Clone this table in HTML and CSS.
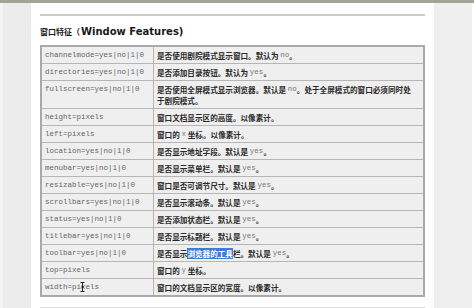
FILE: index.html
```html
<!DOCTYPE html>
<html lang="zh-CN">
<head>
    <meta charset="UTF-8">
    <title>Window Features</title>
    <link rel="stylesheet" href="styles.css">
</head>
<body>
    <div class="topbar"></div>
    <div class="page">
        <div class="side-left"></div>

        <div class="main">
            <div class="rule"></div>
            <h2 class="title"><span class="cjk">窗口特征（</span>Window Features)</h2>

            <!-- window.open() features -->
            <table class="features">
                <tr><td class="key">channelmode=yes|no|1|0</td><td>是否使用剧院模式显示窗口。默认为 <code>no</code>。</td></tr>
                <tr><td class="key">directories=yes|no|1|0</td><td>是否添加目录按钮。默认为 <code>yes</code>。</td></tr>
                <tr><td class="key">fullscreen=yes|no|1|0</td><td>是否使用全屏模式显示浏览器。默认是 <code>no</code>。处于全屏模式的窗口必须同时处于剧院模式。</td></tr>
                <tr><td class="key">height=pixels</td><td>窗口文档显示区的高度。以像素计。</td></tr>
                <tr><td class="key">left=pixels</td><td>窗口的 <code>x</code> 坐标。以像素计。</td></tr>
                <tr><td class="key">location=yes|no|1|0</td><td>是否显示地址字段。默认是 <code>yes</code>。</td></tr>
                <tr><td class="key">menubar=yes|no|1|0</td><td>是否显示菜单栏。默认是 <code>yes</code>。</td></tr>
                <tr><td class="key">resizable=yes|no|1|0</td><td>窗口是否可调节尺寸。默认是 <code>yes</code>。</td></tr>
                <tr><td class="key">scrollbars=yes|no|1|0</td><td>是否显示滚动条。默认是 <code>yes</code>。</td></tr>
                <tr><td class="key">status=yes|no|1|0</td><td>是否添加状态栏。默认是 <code>yes</code>。</td></tr>
                <tr><td class="key">titlebar=yes|no|1|0</td><td>是否显示标题栏。默认是 <code>yes</code>。</td></tr>
                <tr><td class="key">toolbar=yes|no|1|0</td><td>是否显示<span class="selected">浏览器的工具</span>栏。默认是 <code>yes</code>。</td></tr>
                <tr><td class="key">top=pixels</td><td>窗口的 <code>y</code> 坐标。</td></tr>
                <tr><td class="key cursor-cell">width=pixels<svg class="ibeam" width="5" height="10" viewBox="0 0 5 10"><path d="M0.5 0.5h4M2.5 0.5v9M0.5 9.5h4M1 5h3" stroke="#222" stroke-width="1" fill="none"/></svg></td><td>窗口的文档显示区的宽度。以像素计。</td></tr>
            </table>

            <div class="rule rule-bottom"></div>
        </div>

        <div class="side-right"></div>
    </div>
</body>
</html>
```

FILE: styles.css
```css
body {
    margin: 0;
    background: #fff;
    font-family: "Noto Sans CJK SC", sans-serif;
    color: #222;
    overflow: hidden;
}

.topbar {
    height: 3px;
    background-color: #a3a496;
}

.page {
    display: flex;
    height: 305px;
}

.side-left {
    width: 31px;
    background-color: #ececec;
    border-left: 3px solid #f4f4f4;
    box-sizing: border-box;
}

.main {
    flex: 1;
    padding: 11px 9px 0 9px;
}

.side-right {
    width: 38px;
    margin-right: 2px;
    background-color: #efefef;
}

.rule {
    height: 2px;
    background-color: #cbcbcb;
}

.rule-bottom {
    margin-top: 10px;
    background-color: #dcdcdc;
}

.title {
    margin: 10px 0 7px 0;
    font-family: "DejaVu Sans", sans-serif;
    font-size: 10px;
    line-height: 12px;
    font-weight: bold;
    color: #1a1a1a;
}

.title .cjk {
    font-family: "Noto Sans CJK SC", sans-serif;
    font-size: 8px;
    font-weight: bold;
    margin-right: 1px;
}

.features {
    width: 100%;
    border-collapse: collapse;
    border: 2px solid #a9a9a9;
    background-color: #efefef;
}

.features td {
    height: 11px;
    border: 1px solid #b6b6b6;
    padding: 3px 9px 2px 3px;
    font-size: 7.6px;
    font-weight: 600;
    line-height: 11px;
    vertical-align: top;
    color: #2a2a2a;
}

.features td.key {
    width: 105px;
    padding-right: 3px;
    font-family: "Liberation Mono", monospace;
    font-size: 7.5px;
    font-weight: normal;
    color: #666;
}

code {
    font-family: "Liberation Mono", monospace;
    font-size: 7.5px;
    font-weight: normal;
    line-height: 11px;
    vertical-align: top;
    color: #777;
}

.selected {
    background-color: #3d7bd6;
    color: #fff;
}

.cursor-cell {
    position: relative;
}

.ibeam {
    position: absolute;
    left: 38px;
    top: 3px;
}
```
